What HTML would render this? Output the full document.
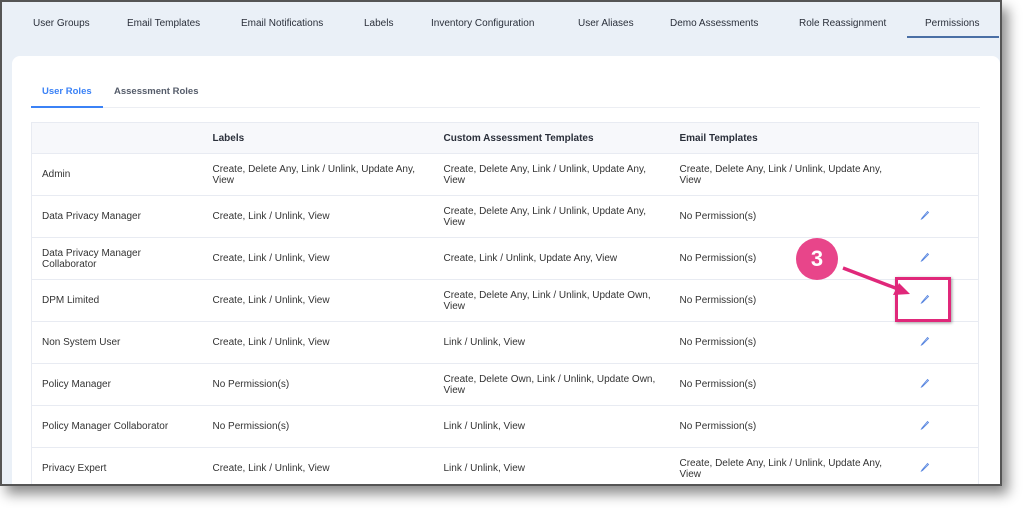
<!DOCTYPE html>
<html><head><style>
*{margin:0;padding:0;box-sizing:border-box}
body{width:1024px;height:508px;background:#fff;font-family:"Liberation Sans",sans-serif;position:relative;overflow:hidden}
.frame{position:absolute;left:0;top:0;width:1002px;height:486px;border:2px solid #555;background:#eaf0f7;overflow:hidden;box-shadow:6px 8px 12px rgba(0,0,0,.45)}
.tabs{position:absolute;top:14px;left:0;right:0;height:26px;font-size:10px;color:#2a2f3a}
.tabs span{position:absolute;top:2px}
.act{border-bottom:2px solid #4a6fa5;height:24px}
.card{position:absolute;left:10px;top:54px;width:988px;height:440px;background:#fff;border-radius:8px}
.sub{position:absolute;top:30px;font-size:9.5px;font-weight:bold}
table{position:absolute;left:19px;top:66px;width:948px;border-collapse:collapse;font-size:10px;color:#333}
td,th{border-top:1px solid #e8ebf2;text-align:left;vertical-align:middle;padding:0 10px;line-height:11px}
th{height:31px;background:#f7f8fb;font-weight:bold;color:#2a2f3a}
td{height:42px}
table{border:1px solid #e8ebf2}
.pen{padding-left:20px}
</style></head><body>
<div class="frame">
<div class="tabs">
<span style="left:31px">User Groups</span>
<span style="left:125px">Email Templates</span>
<span style="left:239px">Email Notifications</span>
<span style="left:362px">Labels</span>
<span style="left:429px">Inventory Configuration</span>
<span style="left:576px">User Aliases</span>
<span style="left:668px">Demo Assessments</span>
<span style="left:797px">Role Reassignment</span>
<div class="act" style="position:absolute;left:905px;width:92px;top:-2px"></div>
<span style="left:923px">Permissions</span>
</div>
<div class="card">
<span class="sub" style="left:30px;color:#3b82f6">User Roles</span>
<span class="sub" style="left:102px;color:#555c6a">Assessment Roles</span>
<div style="position:absolute;left:19px;top:50px;width:72px;height:2px;background:#3b82f6"></div>
<div style="position:absolute;left:91px;top:51px;width:877px;height:1px;background:#eceef3"></div>
<table>
<tr><th style="width:171px"></th><th style="width:231px">Labels</th><th style="width:236px">Custom Assessment Templates</th><th style="width:230px">Email Templates</th><th></th></tr>
<tr><td>Admin</td><td>Create, Delete Any, Link / Unlink, Update Any,<br>View</td><td>Create, Delete Any, Link / Unlink, Update Any,<br>View</td><td>Create, Delete Any, Link / Unlink, Update Any,<br>View</td><td></td></tr>
<tr><td>Data Privacy Manager</td><td>Create, Link / Unlink, View</td><td>Create, Delete Any, Link / Unlink, Update Any,<br>View</td><td>No Permission(s)</td><td class="pen"><svg width="10" height="10" viewBox="0 0 10 10"><path d="M2 8 L1.5 9 L2.5 8.5 L8.5 2.5 L7.5 1.5 Z" fill="none" stroke="#5a87e0" stroke-width="0.9"/></svg></td></tr>
<tr><td>Data Privacy Manager<br>Collaborator</td><td>Create, Link / Unlink, View</td><td>Create, Link / Unlink, Update Any, View</td><td>No Permission(s)</td><td class="pen"><svg width="10" height="10" viewBox="0 0 10 10"><path d="M2 8 L1.5 9 L2.5 8.5 L8.5 2.5 L7.5 1.5 Z" fill="none" stroke="#5a87e0" stroke-width="0.9"/></svg></td></tr>
<tr><td>DPM Limited</td><td>Create, Link / Unlink, View</td><td>Create, Delete Any, Link / Unlink, Update Own,<br>View</td><td>No Permission(s)</td><td class="pen"><svg width="10" height="10" viewBox="0 0 10 10"><path d="M2 8 L1.5 9 L2.5 8.5 L8.5 2.5 L7.5 1.5 Z" fill="none" stroke="#5a87e0" stroke-width="0.9"/></svg></td></tr>
<tr><td>Non System User</td><td>Create, Link / Unlink, View</td><td>Link / Unlink, View</td><td>No Permission(s)</td><td class="pen"><svg width="10" height="10" viewBox="0 0 10 10"><path d="M2 8 L1.5 9 L2.5 8.5 L8.5 2.5 L7.5 1.5 Z" fill="none" stroke="#5a87e0" stroke-width="0.9"/></svg></td></tr>
<tr><td>Policy Manager</td><td>No Permission(s)</td><td>Create, Delete Own, Link / Unlink, Update Own,<br>View</td><td>No Permission(s)</td><td class="pen"><svg width="10" height="10" viewBox="0 0 10 10"><path d="M2 8 L1.5 9 L2.5 8.5 L8.5 2.5 L7.5 1.5 Z" fill="none" stroke="#5a87e0" stroke-width="0.9"/></svg></td></tr>
<tr><td>Policy Manager Collaborator</td><td>No Permission(s)</td><td>Link / Unlink, View</td><td>No Permission(s)</td><td class="pen"><svg width="10" height="10" viewBox="0 0 10 10"><path d="M2 8 L1.5 9 L2.5 8.5 L8.5 2.5 L7.5 1.5 Z" fill="none" stroke="#5a87e0" stroke-width="0.9"/></svg></td></tr>
<tr><td>Privacy Expert</td><td>Create, Link / Unlink, View</td><td>Link / Unlink, View</td><td>Create, Delete Any, Link / Unlink, Update Any,<br>View</td><td class="pen"><svg width="10" height="10" viewBox="0 0 10 10"><path d="M2 8 L1.5 9 L2.5 8.5 L8.5 2.5 L7.5 1.5 Z" fill="none" stroke="#5a87e0" stroke-width="0.9"/></svg></td></tr>
</table>
</div>
<div style="position:absolute;left:893px;top:275px;width:56px;height:45px;border:3px solid #e0287a;box-shadow:1px 1px 3px rgba(0,0,0,.4)"></div>
<svg style="position:absolute;left:0;top:0" width="1000" height="484"><line x1="841" y1="266" x2="896" y2="287" stroke="#e0287a" stroke-width="3.5"/><polygon points="908,292 891,293 897,281" fill="#e0287a"/></svg>
<div style="position:absolute;left:794px;top:236px;width:42px;height:42px;border-radius:50%;background:#e8458a;color:#fff;font-size:22px;font-weight:bold;text-align:center;line-height:42px">3</div>
</div>
</body></html>
